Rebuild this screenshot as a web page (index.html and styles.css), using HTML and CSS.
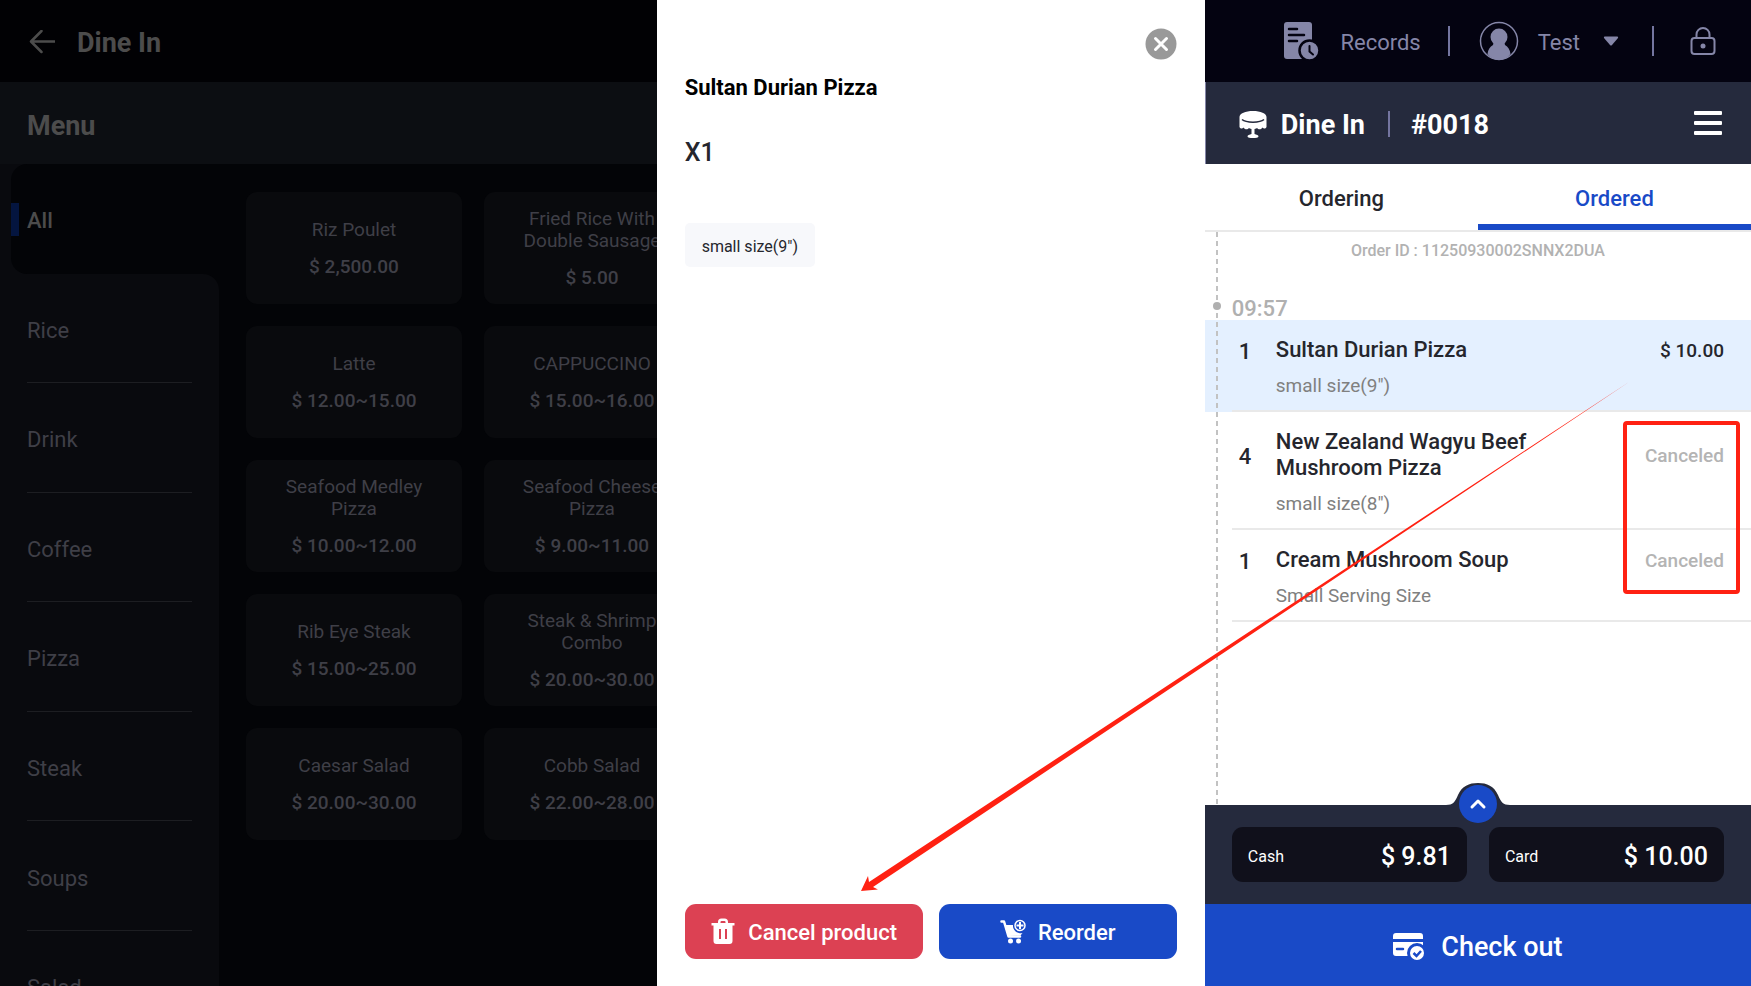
FILE: index.html
```html
<!DOCTYPE html>
<html lang="en">
<head>
<meta charset="utf-8">
<meta name="viewport" content="width=device-width, initial-scale=1">
<title>Dine In #0018</title>
<link rel="stylesheet" href="styles.css">
</head>
<body>
<div class="app">

  <section class="catalog" aria-label="Menu">
    <header class="catalog-top">
      <button class="icon-button back" type="button" aria-label="Back">
        <svg width="28" height="24" viewBox="0 0 28 24" fill="none" stroke="currentColor" stroke-width="2.500" stroke-linecap="round" stroke-linejoin="round"><path d="M14.500 1 4 11.500 14.500 22M4.500 11.500H28"/></svg>
      </button>
      <h1 class="heading">Dine In</h1>
    </header>
    <div class="catalog-bar"><h2 class="heading">Menu</h2></div>
    <div class="catalog-body">
      <nav class="categories" aria-label="Categories">
        <div class="category-current"><button class="category active" type="button">All</button></div>
        <div class="category-list">
          <button class="category" type="button">Rice</button>
          <button class="category" type="button">Drink</button>
          <button class="category" type="button">Coffee</button>
          <button class="category" type="button">Pizza</button>
          <button class="category" type="button">Steak</button>
          <button class="category" type="button">Soups</button>
          <button class="category" type="button">Salad</button>
        </div>
      </nav>
      <div class="products">
        <button class="product" type="button"><span>Riz Poulet</span><span class="product-price">$ 2,500.00</span></button>
        <button class="product" type="button"><span>Fried Rice With Double Sausage</span><span class="product-price">$ 5.00</span></button>
        <button class="product" type="button"><span>Latte</span><span class="product-price">$ 12.00~15.00</span></button>
        <button class="product" type="button"><span>CAPPUCCINO</span><span class="product-price">$ 15.00~16.00</span></button>
        <button class="product" type="button"><span>Seafood Medley Pizza</span><span class="product-price">$ 10.00~12.00</span></button>
        <button class="product" type="button"><span>Seafood Cheese Pizza</span><span class="product-price">$ 9.00~11.00</span></button>
        <button class="product" type="button"><span>Rib Eye Steak</span><span class="product-price">$ 15.00~25.00</span></button>
        <button class="product" type="button"><span>Steak &amp; Shrimp Combo</span><span class="product-price">$ 20.00~30.00</span></button>
        <button class="product" type="button"><span>Caesar Salad</span><span class="product-price">$ 20.00~30.00</span></button>
        <button class="product" type="button"><span>Cobb Salad</span><span class="product-price">$ 22.00~28.00</span></button>
      </div>
    </div>
  </section>

  <section class="detail" role="dialog" aria-labelledby="detail-title">
    <button class="icon-button close" type="button" aria-label="Close">
      <svg width="32" height="32" viewBox="0 0 32 32"><circle cx="16" cy="16" r="15.500" fill="#999"/><path d="m10.500 10.500 11 11m0-11-11 11" stroke="#fff" stroke-width="3" stroke-linecap="round"/></svg>
    </button>
    <h2 class="detail-title" id="detail-title">Sultan Durian Pizza</h2>
    <p class="detail-quantity">X1</p>
    <span class="chip">small size(9")</span>
    <div class="detail-actions">
      <button class="action danger" type="button">
        <svg width="26" height="28" viewBox="0 0 26 28" fill="currentColor" fill-rule="evenodd"><path d="M8 5V4a3.500 3.500 0 0 1 3.500-3.500h3A3.500 3.500 0 0 1 18 4v1h6.500v2.500h-2V23a3 3 0 0 1-3 3h-13a3 3 0 0 1-3-3V7.500h-2V5zm2.500 0h5V4a1 1 0 0 0-1-1h-3a1 1 0 0 0-1 1zM9 11v10h2V11zm6 0v10h2V11z"/></svg>
        <span class="label">Cancel product</span>
      </button>
      <button class="action primary" type="button">
        <svg width="26" height="28" viewBox="0 0 26 28"><path d="M1.500 3.500H4L8.500 18.500H20" fill="none" stroke="currentColor" stroke-width="2.500" stroke-linecap="round" stroke-linejoin="round"/><path d="M4.500 7H13a7.500 7.500 0 0 0 9.500 8L20.500 17.500 9 18z" fill="currentColor"/><circle cx="10.500" cy="23" r="2.500" fill="currentColor"/><circle cx="18.500" cy="23" r="2.500" fill="currentColor"/><circle cx="20" cy="7.500" r="5" fill="none" stroke="currentColor" stroke-width="1.500"/><path d="M20 4v7M16.500 7.500h7" stroke="currentColor" stroke-width="2"/></svg>
        <span class="label">Reorder</span>
      </button>
    </div>
  </section>

  <aside class="order" aria-label="Order">
    <header class="order-top">
      <button class="top-item records" type="button">
        <svg width="36" height="40" viewBox="0 0 36 40"><path d="M3 1h22a3 3 0 0 1 3 3v34H3a3 3 0 0 1-3-3V4a3 3 0 0 1 3-3z" fill="currentColor"/><path d="M5 8h8M5 14h15M5 20h8" stroke="#040311" stroke-width="2.500" stroke-linecap="round"/><circle cx="25.500" cy="29.500" r="10" fill="currentColor" stroke="#040311" stroke-width="2.500"/><path d="M25.500 25v5.500l3.500 3" fill="none" stroke="#040311" stroke-width="2" stroke-linecap="round"/></svg>
        <span class="label">Records</span>
      </button>
      <span class="divider tall"></span>
      <button class="top-item account" type="button">
        <svg width="40" height="40" viewBox="0 0 40 40"><circle cx="20" cy="20" r="18.500" fill="none" stroke="currentColor" stroke-width="1.500"/><circle cx="20" cy="16" r="8.500" fill="currentColor"/><path d="M15 20h10l1 4c3 1.500 5 4.500 5.500 9-3 4-7 6-11.500 6s-8.500-2-11.500-6c.500-4.500 2.500-7.500 5.500-9z" fill="currentColor"/></svg>
        <span class="label">Test</span>
        <svg class="caret" width="16" height="10" viewBox="0 0 16 10" fill="currentColor"><path d="M1.500.500h13q1 .500.500 1.500L9 9q-1 1-2 0L1 2Q.500 1 1.500.500z"/></svg>
      </button>
      <span class="divider tall"></span>
      <button class="icon-button lock" type="button" aria-label="Lock">
        <svg width="26" height="30" viewBox="0 0 26 30" fill="none" stroke="currentColor" stroke-width="2"><rect x="1.500" y="12" width="23" height="16" rx="3"/><path d="M6.500 12V8.500a6.500 6.500 0 0 1 13 0V12"/><circle cx="13" cy="20" r="2.500" fill="currentColor" stroke="none"/></svg>
      </button>
    </header>

    <div class="order-bar">
      <svg width="28" height="28" viewBox="0 0 28 28" fill="#fff"><path d="M.500 7C.500 3.500 6.500 1 14 1s13.500 2.500 13.500 6v10c-1 2-3 2-4 .500-1 2-4 2.500-5.500.500-1.500 1.500-6.500 1.500-8 0-1.500 2-4.500 1.500-5.500-.500-1 1.500-3 1.500-4-.500z"/><path d="M3 9.500c4 3.500 18 3.500 22 0" fill="none" stroke="#252a3d" stroke-width="1.500"/><path d="M12.500 17h3v7c2 .500 4 1 4 2.500 0 2-11 2-11 0 0-1.500 2-2 4-2.500z"/></svg>
      <h2 class="heading">Dine In</h2>
      <span class="divider"></span>
      <span class="heading">#0018</span>
      <button class="icon-button more" type="button" aria-label="Order options">
        <svg width="28" height="28" viewBox="0 0 28 28" fill="currentColor"><rect y="1" width="28" height="4" rx="1"/><rect y="11" width="28" height="4" rx="1"/><rect y="21" width="28" height="4" rx="1"/></svg>
      </button>
    </div>

    <div class="tabs" role="tablist">
      <button class="tab" type="button" role="tab" aria-selected="false">Ordering</button>
      <button class="tab selected" type="button" role="tab" aria-selected="true">Ordered</button>
    </div>

    <div class="timeline">
      <p class="order-id">Order ID : 11250930002SNNX2DUA</p>
      <p class="time">09:57</p>
      <ul class="lines">
        <li class="line current">
          <div class="line-inner">
            <span class="quantity">1</span><span class="name">Sultan Durian Pizza</span><span class="price">$ 10.00</span>
            <span class="option">small size(9")</span>
          </div>
        </li>
        <li class="line">
          <div class="line-inner">
            <span class="quantity">4</span><span class="name">New Zealand Wagyu Beef Mushroom Pizza</span><span class="price canceled">Canceled</span>
            <span class="option">small size(8")</span>
          </div>
        </li>
        <li class="line">
          <div class="line-inner">
            <span class="quantity">1</span><span class="name">Cream Mushroom Soup</span><span class="price canceled">Canceled</span>
            <span class="option">Small Serving Size</span>
          </div>
        </li>
      </ul>
    </div>

    <footer class="payment">
      <button class="expand" type="button" aria-label="Show totals">
        <svg width="64" height="42" viewBox="0 0 64 42"><path d="M0 23c7 0 9-3 12-10C16 4 23 1 32 1s16 3 20 12c3 7 5 10 12 10z" fill="#252a3d"/><circle cx="32" cy="22" r="19" fill="#194ac7"/><path d="m26 25 6-6 6 6" fill="none" stroke="#fff" stroke-width="3" stroke-linecap="round" stroke-linejoin="round"/></svg>
      </button>
      <div class="totals">
        <div class="total"><span>Cash</span><strong class="amount">$ 9.81</strong></div>
        <div class="total"><span>Card</span><strong class="amount">$ 10.00</strong></div>
      </div>
      <button class="checkout" type="button">
        <svg width="32" height="28" viewBox="0 0 32 28"><path d="M3 0h24a3 3 0 0 1 3 3v3H0V3a3 3 0 0 1 3-3zM0 9h30v14H3a3 3 0 0 1-3-3z" fill="#fff"/><path d="M4 16h6" stroke="#194ac7" stroke-width="2.500" stroke-linecap="round"/><circle cx="24" cy="20" r="8.500" fill="#fff" stroke="#194ac7" stroke-width="3"/><path d="m20.500 20 3 3 4.500-5" fill="none" stroke="#194ac7" stroke-width="2.500"/></svg>
        <span>Check out</span>
      </button>
    </footer>
  </aside>

  <svg class="annotation" viewBox="0 0 1751 986" preserveAspectRatio="none" aria-hidden="true">
    <path d="M1629 382 869 882 868 876 861 891 878 889.500 873 887z" fill="#ff2112"/>
    <rect x="1625" y="423" width="113" height="169" rx="2" fill="none" stroke="#ff2112" stroke-width="4"/>
  </svg>
</div>
</body>
</html>
```

FILE: styles.css
```css
* {
  box-sizing: border-box;
}

body {
  margin: 0;
  font-family: Roboto, "Liberation Sans", sans-serif;
  font-size: 22px;
  line-height: 26px;
  color: #25262d;
}

h1, h2, p, ul {
  margin: 0;
  padding: 0;
}

ul {
  list-style: none;
}

button {
  margin: 0;
  padding: 0;
  border: 0;
  background: none;
  color: inherit;
  font: inherit;
  cursor: pointer;
}

svg {
  display: block;
  flex: none;
}

.app {
  position: relative;
  display: grid;
  grid-template-columns: minmax(0, 6fr) minmax(0, 5fr) minmax(0, 5fr);
  height: 100vh;
  overflow: hidden;
}

.heading {
  padding-top: 2px;
  font-size: 27px;
  line-height: 32px;
  font-weight: 700;
}

.icon-button {
  display: flex;
}

/* Dimmed catalogue */
.catalog {
  display: flex;
  flex-direction: column;
  min-height: 0;
  overflow: hidden;
  background: #030407;
  color: #3f3f47;
}

.catalog-top,
.catalog-bar {
  display: flex;
  flex: none;
  align-items: center;
  height: 82px;
  padding-left: 27px;
  color: #4c4c4c;
}

.catalog-top {
  gap: 22px;
  padding-top: 2px;
  background: #010104;
}

.catalog-bar {
  padding-top: 3px;
  background: #0c0e12;
}

.catalog-body {
  display: flex;
  flex: 1;
  min-height: 0;
}

.categories {
  display: flex;
  flex: none;
  flex-direction: column;
  width: 219px;
}

.category-current {
  flex: none;
  padding-left: 11px;
  background: #090a0e;
}

.category-list {
  display: flex;
  flex: none;
  flex-direction: column;
  padding: 0 27px;
  border-top-right-radius: 16px;
  background: #090a0e;
}

.category {
  height: calc(100vh / 9);
  padding-top: 6px;
  border-bottom: 1px solid #1d1e22;
  text-align: left;
}

.category.active {
  position: relative;
  width: 100%;
  padding: 4px 0 0 16px;
  border-bottom: 0;
  border-radius: 16px 0 0 16px;
  background: #030407;
  color: #4c4c4c;
  font-weight: 500;
}

.category.active::before {
  content: "";
  position: absolute;
  top: 39px;
  left: 0;
  width: 8px;
  height: 33px;
  background: #04153f;
}

.products {
  display: grid;
  flex: none;
  grid-template-columns: 216px 216px;
  grid-auto-rows: 112px;
  align-content: start;
  gap: 22px;
  padding: 28px 27px;
}

.product {
  display: flex;
  flex-direction: column;
  align-items: center;
  justify-content: center;
  gap: 15px;
  padding: 1px 24px 0;
  border-radius: 11px;
  background: #090a0d;
  font-size: 19px;
  line-height: 22px;
}

.product-price {
  font-weight: 500;
}

/* Product detail */
.detail {
  display: flex;
  flex-direction: column;
  align-items: flex-start;
  padding: 28px 27px 27px 28px;
  background: #fff;
}

.close {
  align-self: flex-end;
}

.detail-title {
  margin-top: 15px;
  color: #000;
  font-size: 22px;
  font-weight: 700;
}

.detail-quantity {
  margin-top: 36px;
  font-size: 25px;
  line-height: 32px;
  font-weight: 500;
}

.chip {
  margin-top: 54px;
  padding: 14px 17px 10px;
  border-radius: 5px;
  background: #f7f8fb;
  font-size: 16px;
  line-height: 20px;
}

.detail-actions {
  display: grid;
  grid-template-columns: 1fr 1fr;
  gap: 16px;
  width: 100%;
  margin-top: auto;
}

.label {
  padding-top: 2px;
}

.action {
  display: flex;
  align-items: center;
  justify-content: center;
  gap: 12px;
  height: 55px;
  border-radius: 11px;
  color: #fff;
  font-weight: 500;
}

.danger {
  background: #dc4153;
}

.primary {
  background: #194ac7;
}

/* Order column */
.order {
  display: flex;
  flex-direction: column;
  min-height: 0;
  border-left: 1px solid #fff;
  background: #fff;
}

.order-top {
  display: flex;
  flex: none;
  align-items: center;
  justify-content: flex-end;
  height: 82px;
  padding-right: 35px;
  background: #040311;
  color: #8586a8;
}

.top-item {
  display: flex;
  align-items: center;
}

.top-item .label {
  padding-top: 4px;
}

.records {
  gap: 20px;
  margin-right: 27px;
}

.account {
  gap: 19px;
  margin: 0 33px 0 29px;
}

.caret {
  margin-left: 4px;
}

.lock {
  margin-left: 36px;
}

.divider {
  width: 2px;
  height: 26px;
  background: #7475a0;
}

.divider.tall {
  height: 30px;
}

.order-bar {
  display: flex;
  flex: none;
  align-items: center;
  height: 82px;
  padding: 2px 29px 0 33px;
  border-left: 1px solid #8586a8;
  background: #252a3d;
  color: #fff;
}

.order-bar .heading {
  margin-left: 14px;
}

.order-bar .divider {
  margin: 0 7px 0 23px;
}

.more {
  margin-left: auto;
}

.tabs {
  display: grid;
  flex: none;
  grid-template-columns: 1fr 1fr;
  height: 68px;
  border-bottom: 2px solid #e9e9e9;
}

.tab {
  padding-top: 10px;
  border-bottom: 6px solid transparent;
  font-weight: 500;
}

.tab.selected {
  border-color: #194ac7;
  color: #194ac7;
}

.timeline {
  position: relative;
  flex: 1;
  min-height: 0;
  padding-top: 9px;
}

.timeline::before {
  content: "";
  position: absolute;
  z-index: 1;
  top: 0;
  bottom: 0;
  left: 11px;
  width: 2px;
  background: repeating-linear-gradient(#c2c2c2 0 5px, transparent 5px 9px);
}

.order-id {
  color: #b2b2b2;
  font-size: 16px;
  line-height: 20px;
  font-weight: 500;
  text-align: center;
}

.time {
  position: relative;
  margin-top: 33px;
  padding: 4px 0 0 27px;
  color: #b0b0b0;
  line-height: 22px;
  font-weight: 500;
}

.time::before {
  content: "";
  position: absolute;
  z-index: 2;
  top: 8px;
  left: 8px;
  width: 8px;
  height: 8px;
  border-radius: 50%;
  background: #b0b0b0;
}

.line {
  padding-left: 27px;
}

.line.current {
  background: #e4f0ff;
}

.line-inner {
  display: grid;
  grid-template-columns: 44px minmax(0, 260px) 1fr;
  align-items: center;
  row-gap: 12px;
  padding: 17px 27px 13px 0;
  border-bottom: 2px solid #e9e9e9;
}

.quantity {
  padding: 4px 0 0 7px;
  font-weight: 500;
  line-height: 22px;
}

.name {
  font-weight: 500;
}

.price {
  padding-top: 2px;
  font-size: 19px;
  line-height: 22px;
  font-weight: 500;
  text-align: right;
}

.canceled {
  color: #b4b4b4;
}

.option {
  grid-column: 2 / 4;
  color: #808080;
  font-size: 19px;
  line-height: 22px;
}

.payment {
  position: relative;
  flex: none;
  background: #252a3d;
  color: #fff;
}

.expand {
  position: absolute;
  top: -23px;
  left: calc(50% - 32px);
}

.totals {
  display: grid;
  grid-template-columns: 1fr 1fr;
  gap: 22px;
  padding: 22px 27px;
}

.total {
  display: flex;
  align-items: center;
  justify-content: space-between;
  height: 55px;
  padding: 4px 16px 0;
  border-radius: 11px;
  background: #10101b;
  font-size: 16px;
}

.amount {
  font-size: 25px;
  font-weight: 500;
}

.checkout {
  display: flex;
  align-items: center;
  justify-content: center;
  gap: 16px;
  width: 100%;
  height: 82px;
  padding-top: 3px;
  background: #194ac7;
  font-size: 27px;
  font-weight: 500;
}

.annotation {
  position: absolute;
  z-index: 3;
  inset: 0;
  width: 100%;
  height: 100%;
  pointer-events: none;
}
```
